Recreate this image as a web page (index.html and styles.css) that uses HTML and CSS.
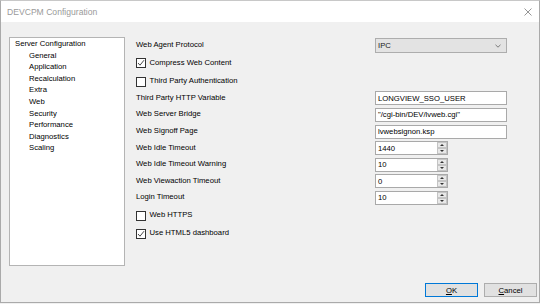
FILE: index.html
```html
<!DOCTYPE html>
<html>
<head>
<meta charset="utf-8">
<link rel="stylesheet" href="styles.css">
</head>
<body>
<div class="window">
  <div class="titlebar">
    <span class="title">DEVCPM Configuration</span>
    <svg class="close" width="8" height="8" viewBox="0 0 8 8"><path d="M0.5 0.5 L7.5 7.5 M7.5 0.5 L0.5 7.5" stroke="#8a8a8a" stroke-width="0.9" fill="none"/></svg>
  </div>
  <div class="content">
    <div class="main">
      <ul class="tree">
        <li>Server Configuration</li>
        <li class="child">General</li>
        <li class="child">Application</li>
        <li class="child">Recalculation</li>
        <li class="child">Extra</li>
        <li class="child">Web</li>
        <li class="child">Security</li>
        <li class="child">Performance</li>
        <li class="child">Diagnostics</li>
        <li class="child">Scaling</li>
      </ul>
      <div class="form">
        <div class="label">Web Agent Protocol</div>
        <div class="select"><span>IPC</span><svg width="6" height="4" viewBox="0 0 6 4"><path d="M0.5 0.8 L3 3.2 L5.5 0.8" stroke="#606060" stroke-width="0.8" fill="none"/></svg></div>

        <div class="check"><span class="box"><svg width="8" height="8" viewBox="0 0 8 8"><path d="M1 4 L3 6.2 L7 1.2" stroke="#333" stroke-width="0.9" fill="none"/></svg></span><span>Compress Web Content</span></div>

        <div class="check"><span class="box"></span><span>Third Party Authentication</span></div>

        <div class="label">Third Party HTTP Variable</div>
        <div class="text">LONGVIEW_SSO_USER</div>

        <div class="label">Web Server Bridge</div>
        <div class="text">"/cgi-bin/DEV/lvweb.cgi"</div>

        <div class="label">Web Signoff Page</div>
        <div class="text">lvwebsignon.ksp</div>

        <div class="label">Web Idle Timeout</div>
        <div class="spin"><span class="val">1440</span><span class="btns"><span class="up"></span><span class="down"></span></span></div>

        <div class="label">Web Idle Timeout Warning</div>
        <div class="spin"><span class="val">10</span><span class="btns"><span class="up"></span><span class="down"></span></span></div>

        <div class="label">Web Viewaction Timeout</div>
        <div class="spin"><span class="val">0</span><span class="btns"><span class="up"></span><span class="down"></span></span></div>

        <div class="label">Login Timeout</div>
        <div class="spin"><span class="val">10</span><span class="btns"><span class="up"></span><span class="down"></span></span></div>

        <div class="check"><span class="box"></span><span>Web HTTPS</span></div>

        <div class="check"><span class="box"><svg width="8" height="8" viewBox="0 0 8 8"><path d="M1 4 L3 6.2 L7 1.2" stroke="#333" stroke-width="0.9" fill="none"/></svg></span><span>Use HTML5 dashboard</span></div>
      </div>
    </div>
    <div class="footer">
      <div class="btn default"><span><u>O</u>K</span></div>
      <div class="btn"><span><u>C</u>ancel</span></div>
    </div>
  </div>
</div>
</body>
</html>
```
FILE: styles.css
```css
html, body {
  margin: 0;
  padding: 0;
  background: #f0f0f0;
}
body {
  font-family: "Liberation Sans", Arial, sans-serif;
  font-size: 7.7px;
  color: #000;
}
.window {
  box-sizing: border-box;
  width: 540px;
  height: 303px;
  border: 1px solid #aaaaaa;
  border-top-color: #c8c8c8;
  background: #f0f0f0;
  display: flex;
  flex-direction: column;
}
.titlebar {
  height: 21px;
  background: #ffffff;
  display: flex;
  align-items: center;
  justify-content: space-between;
  padding: 0 7px 0 6px;
  flex: none;
}
.title {
  font-size: 8.6px;
  color: #9a9a9a;
}
.close {
  display: block;
}
.content {
  flex: 1;
  display: flex;
  flex-direction: column;
  padding: 15px 2px 5px 8px;
}
.main {
  display: flex;
  gap: 11px;
  height: 229px;
}
.tree {
  box-sizing: border-box;
  width: 116px;
  height: 229px;
  margin: 0;
  padding: 0 0 0 5px;
  list-style: none;
  background: #ffffff;
  border: 1px solid #b4b4b4;
}
.tree li {
  line-height: 11.6px;
  white-space: nowrap;
}
.tree li.child {
  padding-left: 14px;
}
.form {
  margin-top: 1.5px;
  display: grid;
  grid-template-columns: 239px 132px;
  grid-template-rows: 17px 18.5px 17.3px 16.7px 16.7px 16.6px 16.4px 16.6px 16.7px 17.5px 18px 14px;
  align-items: start;
}
.label {
  height: 14px;
  display: flex;
  align-items: center;
  padding-bottom: 2px;
  box-sizing: border-box;
  white-space: nowrap;
}
.select {
  box-sizing: border-box;
  height: 15px;
  margin-top: -0.5px;
  width: 132px;
  background: #e3e3e3;
  border: 1px solid #adadad;
  display: flex;
  align-items: center;
  justify-content: space-between;
  padding: 0 5px 0 2px;
  color: #1a1a1a;
}
.select svg {
  display: block;
}
.check {
  grid-column: 1 / -1;
  height: 14px;
  display: flex;
  align-items: center;
  gap: 3.5px;
  white-space: nowrap;
}
.check > span:last-child {
  margin-top: -1px;
}
.box {
  box-sizing: border-box;
  width: 10px;
  height: 10px;
  border: 1px solid #333333;
  background: #ffffff;
  display: flex;
  align-items: center;
  justify-content: center;
  margin-top: 1px;
}
.box svg {
  display: block;
}
.text {
  box-sizing: border-box;
  width: 132px;
  height: 14px;
  background: #ffffff;
  border: 1px solid #a9a9a9;
  display: flex;
  align-items: center;
  padding-left: 2px;
  white-space: nowrap;
}
.spin {
  box-sizing: border-box;
  width: 73px;
  height: 14px;
  background: #ffffff;
  border: 1px solid #a9a9a9;
  display: flex;
  align-items: center;
  justify-content: space-between;
  padding-left: 2px;
}
.btns {
  display: flex;
  flex-direction: column;
  width: 10px;
  height: 12px;
  margin-right: 0.5px;
}
.btns span {
  flex: 1;
  background: #e8e8e8;
  border: 1px solid #c4c4c4;
  box-sizing: border-box;
  position: relative;
}
.btns .up::after,
.btns .down::after {
  content: "";
  position: absolute;
  left: 2.5px;
  width: 0;
  height: 0;
  border-left: 2px solid transparent;
  border-right: 2px solid transparent;
}
.btns .up::after {
  top: 1px;
  border-bottom: 2.5px solid #333;
}
.btns .down::after {
  top: 1px;
  border-top: 2.5px solid #333;
}
.footer {
  margin-top: 17px;
  display: flex;
  justify-content: flex-end;
  gap: 6px;
}
.btn {
  box-sizing: border-box;
  width: 53px;
  height: 14px;
  background: #e1e1e1;
  border: 1px solid #adadad;
  display: flex;
  align-items: center;
  justify-content: center;
}
.btn.default {
  border-color: #0078d7;
}
.btn u {
  text-decoration-thickness: 0.6px;
  text-underline-offset: 1px;
}
```
